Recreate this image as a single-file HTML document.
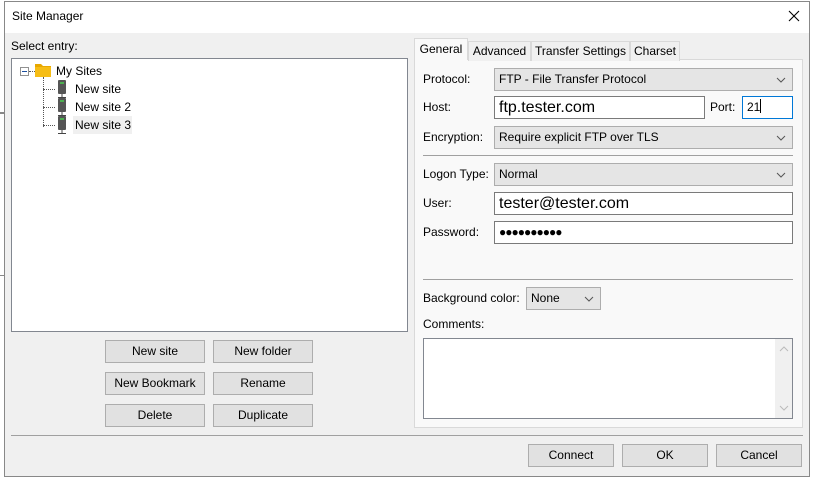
<!DOCTYPE html>
<html><head><style>
*{box-sizing:border-box;margin:0;padding:0}
body{width:814px;height:478px;background:#fff;position:relative;overflow:hidden;font-family:"Liberation Sans",sans-serif;font-size:12px;color:#000}
.a{position:absolute}
.dlg{left:4px;top:1px;width:806px;height:476px;background:#f0f0f0;border:1px solid #888}
.title{left:5px;top:2px;width:804px;height:31px;background:#fff}
.btn{position:absolute;background:#e1e1e1;border:1px solid #adadad;text-align:center;line-height:21px;height:23px}
.lbl{position:absolute;line-height:14px}
.dd{position:absolute;background:#e5e5e5;border:1px solid #adadad;height:23px;line-height:21px;padding-left:4px}
.dd svg{position:absolute;right:6px;top:8px}
.in{position:absolute;background:#fff;border:1px solid #7a7a7a;height:23px;padding-left:4px}
.sep{position:absolute;height:1px;background:#a0a0a0}
.tab{position:absolute;border:1px solid #d9d9d9;border-bottom:none;background:#f0f0f0;text-align:center;line-height:18px;height:20px}
</style></head><body>
<div class="a" style="left:0;top:112px;width:4px;height:2px;background:#888"></div>
<div class="a" style="left:0;top:275px;width:4px;height:1px;background:#888"></div>
<div class="a dlg"></div>
<div class="a title"></div>
<div class="lbl" style="left:12px;top:9px;font-size:12px">Site Manager</div>
<svg class="a" style="left:788px;top:10px" width="12" height="12"><path d="M1 1L11 11M11 1L1 11" stroke="#000" stroke-width="1.1"/></svg>

<div class="lbl" style="left:11px;top:39px">Select entry:</div>
<div class="a" style="left:11px;top:58px;width:397px;height:274px;background:#fff;border:1px solid #828790"></div>
<div class="a" style="left:20px;top:67px;width:9px;height:9px;border:1px solid #919191;background:#fff"></div>
<div class="a" style="left:22px;top:71px;width:5px;height:1px;background:#1c4fa0"></div>
<div class="a" style="left:29px;top:71px;width:6px;border-top:1px dotted #555"></div>
<div class="a" style="left:43px;top:77px;height:50px;border-left:1px dotted #555"></div>
<div class="a" style="left:43px;top:89px;width:12px;border-top:1px dotted #555"></div>
<div class="a" style="left:43px;top:107px;width:12px;border-top:1px dotted #555"></div>
<div class="a" style="left:43px;top:125px;width:12px;border-top:1px dotted #555"></div>
<svg class="a" style="left:35px;top:63px" width="16" height="14"><path d="M0 1h6l2 2h8v11H0z" fill="#e8a800"/><rect x="0" y="4" width="16" height="10" fill="#f6bd16"/></svg>
<div class="lbl" style="left:56px;top:64px">My Sites</div>
<svg class="a" style="left:57px;top:80px" width="10" height="19"><rect x="1" y="0" width="8" height="14" rx="1" fill="#555"/><rect x="3" y="2" width="4" height="2" fill="#4caf50"/><rect x="4.5" y="14" width="1" height="3" fill="#444"/><rect x="1" y="17" width="8" height="1" fill="#444"/></svg>
<svg class="a" style="left:57px;top:98px" width="10" height="19"><rect x="1" y="0" width="8" height="14" rx="1" fill="#555"/><rect x="3" y="2" width="4" height="2" fill="#4caf50"/><rect x="4.5" y="14" width="1" height="3" fill="#444"/><rect x="1" y="17" width="8" height="1" fill="#444"/></svg>
<svg class="a" style="left:57px;top:116px" width="10" height="19"><rect x="1" y="0" width="8" height="14" rx="1" fill="#555"/><rect x="3" y="2" width="4" height="2" fill="#4caf50"/><rect x="4.5" y="14" width="1" height="3" fill="#444"/><rect x="1" y="17" width="8" height="1" fill="#444"/></svg>
<div class="lbl" style="left:75px;top:82px">New site</div>
<div class="lbl" style="left:75px;top:100px">New site 2</div>
<div class="a" style="left:73px;top:116px;width:59px;height:18px;background:#f0f0f0"></div>
<div class="lbl" style="left:75px;top:118px">New site 3</div>

<div class="btn" style="left:105px;top:340px;width:100px">New site</div>
<div class="btn" style="left:213px;top:340px;width:100px">New folder</div>
<div class="btn" style="left:105px;top:372px;width:100px">New Bookmark</div>
<div class="btn" style="left:213px;top:372px;width:100px">Rename</div>
<div class="btn" style="left:105px;top:404px;width:100px">Delete</div>
<div class="btn" style="left:213px;top:404px;width:100px">Duplicate</div>

<div class="a" style="left:414px;top:59px;width:389px;height:369px;background:#f9f9f9;border:1px solid #d9d9d9"></div>
<div class="tab" style="left:468px;top:41px;width:63px">Advanced</div>
<div class="tab" style="left:531px;top:41px;width:99px">Transfer Settings</div>
<div class="tab" style="left:630px;top:41px;width:50px">Charset</div>
<div class="tab" style="left:414px;top:38px;width:54px;height:22px;background:#f9f9f9;line-height:20px">General</div>

<div class="lbl" style="left:423px;top:72px">Protocol:</div>
<div class="dd" style="left:494px;top:68px;width:299px">FTP - File Transfer Protocol<svg width="10" height="6"><path d="M1 1l4 4 4-4" stroke="#555" fill="none"/></svg></div>
<div class="lbl" style="left:423px;top:100px">Host:</div>
<div class="in" style="left:494px;top:96px;width:211px;font-size:16px;line-height:21px">ftp.tester.com</div>
<div class="lbl" style="left:710px;top:100px">Port:</div>
<div class="in" style="left:742px;top:96px;width:51px;border-color:#0078d7;line-height:21px">21<span style="display:inline-block;width:1px;height:14px;background:#000;vertical-align:-2px"></span></div>
<div class="lbl" style="left:423px;top:130px">Encryption:</div>
<div class="dd" style="left:494px;top:126px;width:299px">Require explicit FTP over TLS<svg width="10" height="6"><path d="M1 1l4 4 4-4" stroke="#555" fill="none"/></svg></div>
<div class="sep" style="left:423px;top:155px;width:370px"></div>
<div class="lbl" style="left:423px;top:167px">Logon Type:</div>
<div class="dd" style="left:494px;top:163px;width:299px">Normal<svg width="10" height="6"><path d="M1 1l4 4 4-4" stroke="#555" fill="none"/></svg></div>
<div class="lbl" style="left:423px;top:196px">User:</div>
<div class="in" style="left:494px;top:192px;width:299px;font-size:16px;line-height:21px">tester@tester.com</div>
<div class="lbl" style="left:423px;top:225px">Password:</div>
<div class="in" style="left:494px;top:221px;width:299px;line-height:21px;font-size:12px;letter-spacing:-1px">●●●●●●●●●●</div>
<div class="sep" style="left:423px;top:279px;width:370px"></div>
<div class="lbl" style="left:423px;top:291px">Background color:</div>
<div class="dd" style="left:526px;top:287px;width:75px">None<svg width="10" height="6"><path d="M1 1l4 4 4-4" stroke="#555" fill="none"/></svg></div>
<div class="lbl" style="left:423px;top:317px">Comments:</div>
<div class="a" style="left:423px;top:338px;width:370px;height:81px;background:#fff;border:1px solid #828790"></div>
<div class="a" style="left:775px;top:339px;width:17px;height:79px;background:#f0f0f0"></div>
<svg class="a" style="left:779px;top:346px" width="10" height="6"><path d="M1 5l4-4 4 4" stroke="#bbb" fill="none"/></svg>
<svg class="a" style="left:779px;top:405px" width="10" height="6"><path d="M1 1l4 4 4-4" stroke="#bbb" fill="none"/></svg>

<div class="sep" style="left:11px;top:435px;width:792px"></div>
<div class="btn" style="left:528px;top:444px;width:86px">Connect</div>
<div class="btn" style="left:622px;top:444px;width:86px">OK</div>
<div class="btn" style="left:716px;top:444px;width:86px">Cancel</div>
</body></html>
